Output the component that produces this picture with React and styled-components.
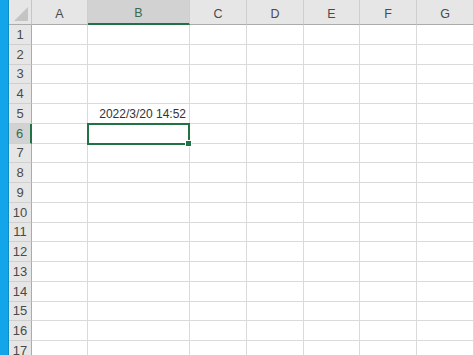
import React from 'react';
import styled, { createGlobalStyle } from 'styled-components';

const GlobalStyle = createGlobalStyle`
  html, body {
    margin: 0;
    padding: 0;
    background: #fff;
    overflow: hidden;
  }
  body {
    font-family: "Liberation Sans", Arial, sans-serif;
  }
`;

const COLS = [
  { name: 'A', width: 56 },
  { name: 'B', width: 102 },
  { name: 'C', width: 57 },
  { name: 'D', width: 57 },
  { name: 'E', width: 56 },
  { name: 'F', width: 57 },
  { name: 'G', width: 57 },
];
const ROWS = 17;
const ACTIVE = { col: 'B', row: 6 };
const VALUES = { B5: '2022/3/20 14:52' };

const Page = styled.div`
  display: flex;
  width: 474px;
  height: 355px;
  overflow: hidden;
`;

const SideStrip = styled.div`
  flex: 0 0 9px;
  background: #12a5ea;
  border-right: 1px solid #0e8cc8;
  box-sizing: border-box;
`;

const Sheet = styled.div`
  display: grid;
  grid-template-columns: 23px ${COLS.map((c) => `${c.width}px`).join(' ')};
  grid-template-rows: 25px repeat(${ROWS}, 19.75px);
  align-content: start;
`;

const Corner = styled.div`
  position: relative;
  background: #e6e6e6;
  border-right: 1px solid #c6c6c6;
  border-bottom: 1px solid #ababab;

  &::after {
    content: '';
    position: absolute;
    right: 3px;
    bottom: 3px;
    border-style: solid;
    border-width: 0 0 14px 14px;
    border-color: transparent transparent #c4c4c4 transparent;
  }
`;

const ColHead = styled.div`
  display: flex;
  align-items: center;
  justify-content: center;
  padding-top: 3px;
  font-size: 12.5px;
  color: ${(p) => (p.$active ? '#3c6a50' : '#4a4a4a')};
  background: ${(p) => (p.$active ? '#d2d2d2' : '#e6e6e6')};
  border-right: 1px solid #cfcfcf;
  border-bottom: ${(p) => (p.$active ? '2px solid #217346' : '1px solid #ababab')};
`;

const RowHead = styled.div`
  display: flex;
  align-items: center;
  justify-content: center;
  font-size: 13px;
  color: ${(p) => (p.$active ? '#3c6a50' : '#4a4a4a')};
  background: ${(p) => (p.$active ? '#d2d2d2' : '#e6e6e6')};
  border-right: ${(p) => (p.$active ? '2px solid #217346' : '1px solid #ababab')};
  border-bottom: 1px solid #cfcfcf;
`;

const Cell = styled.div`
  position: relative;
  display: flex;
  align-items: flex-end;
  justify-content: flex-end;
  padding: 0 3px 2px 0;
  font-size: 12px;
  color: #333;
  white-space: nowrap;
  border-right: 1px solid #dadada;
  border-bottom: 1px solid #dadada;
`;

const Selection = styled.div`
  position: absolute;
  left: -1px;
  top: -1px;
  right: -1px;
  bottom: -2px;
  border: 2px solid #217346;
  pointer-events: none;
  z-index: 2;
`;

const FillHandle = styled.div`
  position: absolute;
  right: -4px;
  bottom: -4px;
  width: 5px;
  height: 5px;
  background: #217346;
  border: 1px solid #fff;
`;

export default function App() {
  return (
    <>
      <GlobalStyle />
      <Page>
        <SideStrip />
        <Sheet>
          <Corner />
          {COLS.map((c) => (
            <ColHead key={c.name} $active={c.name === ACTIVE.col}>
              {c.name}
            </ColHead>
          ))}
          {Array.from({ length: ROWS }, (_, i) => {
            const row = i + 1;
            return (
              <React.Fragment key={row}>
                <RowHead $active={row === ACTIVE.row}>{row}</RowHead>
                {COLS.map((c) => {
                  const id = `${c.name}${row}`;
                  const selected = c.name === ACTIVE.col && row === ACTIVE.row;
                  return (
                    <Cell key={id}>
                      {VALUES[id]}
                      {selected && (
                        <Selection>
                          <FillHandle />
                        </Selection>
                      )}
                    </Cell>
                  );
                })}
              </React.Fragment>
            );
          })}
        </Sheet>
      </Page>
    </>
  );
}
